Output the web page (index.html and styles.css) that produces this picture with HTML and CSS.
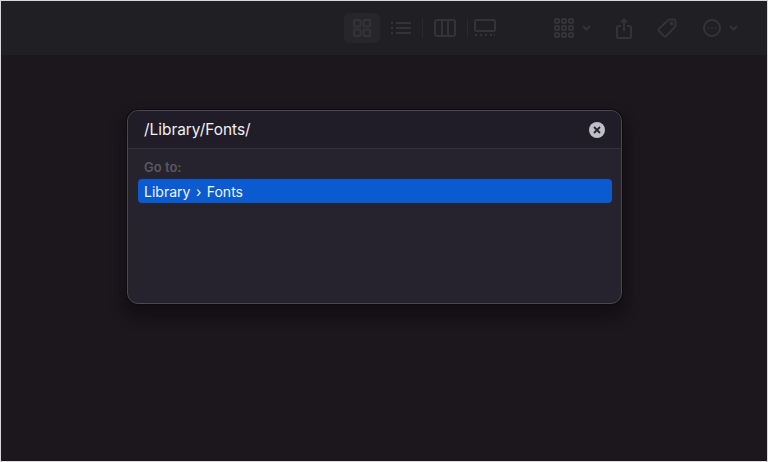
FILE: index.html
```html
<!DOCTYPE html>
<html lang="en">
<head>
  <meta charset="UTF-8">
  <title>Go to folder</title>
  <link rel="stylesheet" href="styles.css">
</head>
<body>
  <div class="window">
    <!--toolbar, dimmed behind the sheet-->
    <div class="toolbar">
      <div class="view-btn grid-btn active">
        <svg width="18" height="18" viewBox="0 0 18 18"><rect x="1" y="1" width="6.500" height="6.500" rx="1"/><rect x="10.500" y="1" width="6.500" height="6.500" rx="1"/><rect x="1" y="10.500" width="6.500" height="6.500" rx="1"/><rect x="10.500" y="10.500" width="6.500" height="6.500" rx="1"/></svg>
      </div>
      <div class="view-btn list-btn">
        <svg width="20" height="14" viewBox="0 0 20 14"><path d="M0 2h2M0 7h2M0 12h2M5 2h15M5 7h15M5 12h15"/></svg>
      </div>
      <div class="divider"></div>
      <div class="view-btn column-btn">
        <svg width="22" height="18" viewBox="0 0 22 18"><rect x="1" y="1" width="20" height="16" rx="2"/><path d="M8 1v16M14 1v16"/></svg>
      </div>
      <div class="divider"></div>
      <div class="view-btn gallery-btn">
        <svg width="22" height="18" viewBox="0 0 22 18"><rect x="1" y="1" width="20" height="11" rx="1.500"/><path d="M1 16h2M6 16h2M11 16h2M16 16h2M20 16h1"/></svg>
      </div>

      <div class="tool group-tool">
        <svg width="20" height="20" viewBox="0 0 20 20"><rect x="1" y="1" width="4" height="4" rx="1"/><rect x="8" y="1" width="4" height="4" rx="1"/><rect x="15" y="1" width="4" height="4" rx="1"/><rect x="1" y="8" width="4" height="4" rx="1"/><rect x="8" y="8" width="4" height="4" rx="1"/><rect x="15" y="8" width="4" height="4" rx="1"/><rect x="1" y="15" width="4" height="4" rx="1"/><rect x="8" y="15" width="4" height="4" rx="1"/><rect x="15" y="15" width="4" height="4" rx="1"/></svg>
        <svg class="chev" width="9" height="6" viewBox="0 0 9 6"><path d="M1 1l3.500 3.500L8 1"/></svg>
      </div>
      <div class="tool share-tool">
        <svg width="16" height="21" viewBox="0 0 16 21"><path d="M5 8H2.500A1.500 1.500 0 0 0 1 9.500V18.500A1.500 1.500 0 0 0 2.500 20H13.500A1.500 1.500 0 0 0 15 18.500V9.500A1.500 1.500 0 0 0 13.500 8H11M8 13V1.500M5 4.500L8 1.500 11 4.500"/></svg>
      </div>
      <div class="tool tag-tool">
        <svg width="20" height="20" viewBox="0 0 20 20"><path d="M11 2.200A2.500 2.500 0 0 1 12.800 1.500H16.500A2 2 0 0 1 18.500 3.500V7.200A2.500 2.500 0 0 1 17.800 9L9.500 17.800A2 2 0 0 1 6.700 17.800L2.200 13.300A2 2 0 0 1 2.200 10.500Z"/><circle cx="14.500" cy="5.500" r="1"/></svg>
      </div>
      <div class="tool more-tool">
        <svg width="18" height="18" viewBox="0 0 18 18"><circle cx="9" cy="9" r="8"/><circle class="dot" cx="5.500" cy="9" r="1"/><circle class="dot" cx="9" cy="9" r="1"/><circle class="dot" cx="12.500" cy="9" r="1"/></svg>
        <svg class="chev" width="9" height="6" viewBox="0 0 9 6"><path d="M1 1l3.500 3.500L8 1"/></svg>
      </div>
    </div>

    <div class="content">
      <div class="sheet">
        <div class="sheet-head">
          <span class="path">/Library/Fonts/</span>
          <span class="clear-btn">
            <svg width="8" height="8" viewBox="0 0 8 8"><path d="M1 1l6 6M7 1L1 7"/></svg>
          </span>
        </div>
        <div class="sheet-body">
          <div class="goto">Go to:</div>
          <div class="result">
            <span>Library</span>
            <span class="sep">›</span>
            <span>Fonts</span>
          </div>
        </div>
      </div>
    </div>
  </div>
</body>
</html>
```

FILE: styles.css
```css
:root{
  --Window: #1b171c;
  --Toolbar: #201f23;
  --Icon: #343337;
  --Sheet-head: #201d28;
  --Sheet-body: #26232e;
  --Blue: #0a5bd0;
}
*{
  box-sizing: border-box;
}
body{
  margin: 0;
  width: 768px;
  height: 462px;
  overflow: hidden;
  background-color: #d8d8d8;
  font-family: "Inter", "Liberation Sans", sans-serif;
}
.window{
  height: 460px;
  margin: 1px 1px 0;
  display: flex;
  flex-direction: column;
  background-color: var(--Window);
}
.toolbar{
  height: 55px;
  flex-shrink: 0;
  display: flex;
  align-items: center;
  padding-left: 343px;
  background-color: var(--Toolbar);
  border-bottom: 1px solid #1a181b;
}
.toolbar svg{
  display: block;
  fill: none;
  stroke: var(--Icon);
  stroke-width: 2;
  filter: blur(0.4px);
}
.view-btn{
  height: 30px;
  display: flex;
  justify-content: center;
  align-items: center;
  border-radius: 6px;
}
.grid-btn{
  width: 36px;
}
.list-btn{
  width: 42px;
}
.column-btn{
  width: 44px;
}
.gallery-btn{
  width: 33px;
}
.view-btn.active{
  background-color: #272629;
}
.divider{
  width: 1px;
  height: 20px;
  background-color: #2a292d;
}
.tool{
  display: flex;
  align-items: center;
  gap: 8px;
}
.group-tool{
  margin-left: 53px;
}
.share-tool{
  margin-left: 25px;
}
.tag-tool{
  margin-left: 25px;
}
.more-tool{
  margin-left: 26px;
}
.toolbar .dot{
  fill: var(--Icon);
  stroke: none;
}
.content{
  flex: 1;
  padding-top: 54px;
  padding-left: 126px;
}
.sheet{
  width: 495px;
  height: 194px;
  display: flex;
  flex-direction: column;
  overflow: hidden;
  border: 1px solid #4a4850;
  border-radius: 11px;
  background-color: var(--Sheet-body);
  box-shadow: 0 0 0 1px #0d0b0e, 0 10px 14px 4px rgba(8, 6, 8, 0.45);
}
.sheet-head{
  height: 38px;
  flex-shrink: 0;
  display: flex;
  align-items: center;
  justify-content: space-between;
  padding: 0 16px;
  background-color: var(--Sheet-head);
  border-bottom: 1px solid #35323c;
}
.path{
  font-size: 15.400px;
  color: #f1f0f3;
}
.clear-btn{
  width: 16px;
  height: 16px;
  display: flex;
  justify-content: center;
  align-items: center;
  border-radius: 50%;
  background-color: #c0bfc5;
}
.clear-btn svg{
  fill: none;
  stroke: #26232e;
  stroke-width: 1.8;
}
.sheet-body{
  flex: 1;
  padding: 11px 9px 0 10px;
}
.goto{
  padding-left: 6px;
  font-size: 13px;
  font-weight: 600;
  line-height: 15px;
  color: #5a5860;
}
.result{
  height: 24px;
  margin-top: 4px;
  padding-left: 6px;
  display: flex;
  align-items: center;
  gap: 5.500px;
  border-radius: 4px;
  background-color: var(--Blue);
  font-size: 14px;
  color: #f2f5fb;
}
```
